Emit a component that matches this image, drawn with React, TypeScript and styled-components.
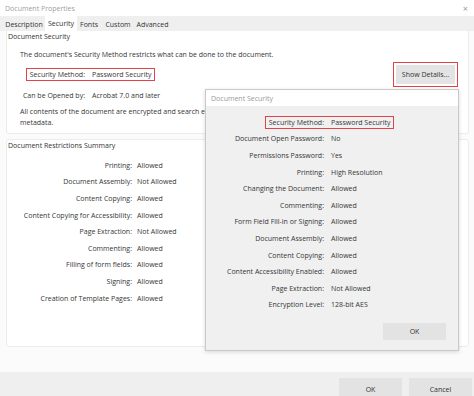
import { styled, createGlobalStyle } from 'styled-components';

const GlobalStyle = createGlobalStyle`
  *, *::before, *::after {
    box-sizing: border-box;
  }
  html, body {
    margin: 0;
    padding: 0;
    background: #fbfbfb;
  }
  body {
    font-family: 'Open Sans', 'Noto Sans', sans-serif;
    font-size: 7px;
    color: #363636;
  }
`;

const RESTRICTIONS = [
  ['Printing:', 'Allowed'],
  ['Document Assembly:', 'Not Allowed'],
  ['Content Copying:', 'Allowed'],
  ['Content Copying for Accessibility:', 'Allowed'],
  ['Page Extraction:', 'Not Allowed'],
  ['Commenting:', 'Allowed'],
  ['Filling of form fields:', 'Allowed'],
  ['Signing:', 'Allowed'],
  ['Creation of Template Pages:', 'Allowed'],
];

const DETAILS = [
  ['Document Open Password:', 'No'],
  ['Permissions Password:', 'Yes'],
  ['Printing:', 'High Resolution'],
  ['Changing the Document:', 'Allowed'],
  ['Commenting:', 'Allowed'],
  ['Form Field Fill-in or Signing:', 'Allowed'],
  ['Document Assembly:', 'Allowed'],
  ['Content Copying:', 'Allowed'],
  ['Content Accessibility Enabled:', 'Allowed'],
  ['Page Extraction:', 'Not Allowed'],
  ['Encryption Level:', '128-bit AES'],
];

const TABS = [
  { name: 'Description', width: 42 },
  { name: 'Security', width: 32, active: true },
  { name: 'Fonts', width: 24 },
  { name: 'Custom', width: 34 },
  { name: 'Advanced', width: 35 },
];

const App = () => {
  return (
    <Window>
      <GlobalStyle />
      <TitleBar>
        <span>Document Properties</span>
        <Close>×</Close>
      </TitleBar>
      <TabStrip>
        {TABS.map((tab) => (
          <Tab key={tab.name} $width={tab.width} $active={tab.active}>
            {tab.name}
          </Tab>
        ))}
      </TabStrip>
      <Content>
        <SecurityBox>
          <Heading>Document Security</Heading>
          <Intro>The document's Security Method restricts what can be done to the document.</Intro>
          <MethodRow>
            <InfoGrid>
              <Label>
                <MarkStart>Security Method:</MarkStart>
              </Label>
              <Value $gap={7}>
                <MarkEnd $gap={7}>Password Security</MarkEnd>
              </Value>
            </InfoGrid>
            <ButtonFrame>
              <Button $width={59} $height={19}>Show Details...</Button>
            </ButtonFrame>
          </MethodRow>
          <InfoGrid>
            <Label>Can be Opened by:</Label>
            <Value $gap={7}>Acrobat 7.0 and later</Value>
          </InfoGrid>
          <Paragraph>
            All contents of the document are encrypted and search engines cannot access the document's
            <br />
            metadata.
          </Paragraph>
        </SecurityBox>
        <SummaryBox>
          <Heading>Document Restrictions Summary</Heading>
          <Rows $labelWidth={124}>
            {RESTRICTIONS.map(([label, value]) => (
              <Row key={label}>
                <Label>{label}</Label>
                <Value $gap={5}>{value}</Value>
              </Row>
            ))}
          </Rows>
        </SummaryBox>

        <Popup>
          <PopupTitle>Document Security</PopupTitle>
          <PopupBody>
            <Rows $labelWidth={118}>
              <Row>
                <Label>
                  <MarkStart>Security Method:</MarkStart>
                </Label>
                <Value $gap={7}>
                  <MarkEnd $gap={7}>Password Security</MarkEnd>
                </Value>
              </Row>
              {DETAILS.map(([label, value]) => (
                <Row key={label}>
                  <Label>{label}</Label>
                  <Value $gap={7}>{value}</Value>
                </Row>
              ))}
            </Rows>
            <PopupActions>
              <Button $width={63} $height={17}>OK</Button>
            </PopupActions>
          </PopupBody>
        </Popup>
      </Content>
      <Footer>
        <Button $width={63} $height={23}>OK</Button>
        <Button $width={63} $height={23}>Cancel</Button>
      </Footer>
    </Window>
  );
};

export default App;

const Window = styled.div`
  position: relative;
  width: 474px;
  height: 396px;
  overflow: hidden;
  display: flex;
  flex-direction: column;
  background: #fbfbfb;
`;

const TitleBar = styled.div`
  height: 16px;
  flex-shrink: 0;
  display: flex;
  align-items: center;
  justify-content: space-between;
  padding: 0 6px 0 5px;
  background: #fff;
  color: #a0a0a0;
  font-size: 7px;
`;

const Close = styled.span`
  font-size: 9px;
  color: #9a9a9a;
`;

const TabStrip = styled.div`
  height: 15px;
  flex-shrink: 0;
  display: flex;
  align-items: flex-end;
  padding-left: 3px;
  background: #efefef;
`;

const Tab = styled.div<{ $width: number; $active?: boolean }>`
  width: ${(p) => p.$width}px;
  height: ${(p) => (p.$active ? 16 : 14)}px;
  display: flex;
  align-items: center;
  justify-content: center;
  background: ${(p) => (p.$active ? '#fff' : 'transparent')};
  color: #333;
  font-size: 7px;
`;

const Content = styled.div`
  flex: none;
  display: flex;
  flex-direction: column;
  gap: 5px;
  padding: 0 5px 0 6px;
`;

const GroupBox = styled.div`
  background: #fff;
  border: 1px solid #ececec;
  border-top: none;
  border-radius: 0 0 3px 3px;
`;

const SecurityBox = styled(GroupBox)`
  height: 103px;
  padding: 0 0 0 1px;
`;

const SummaryBox = styled(GroupBox)`
  height: 208px;
  border-top: 1px solid #ececec;
  border-radius: 3px;
  padding: 0 0 0 1px;
`;

const Heading = styled.div`
  line-height: 12px;
  font-size: 7px;
  color: #333;
`;

const Intro = styled.div`
  margin: 6px 0 0 12px;
  line-height: 12px;
`;

const MethodRow = styled.div`
  display: flex;
  align-items: center;
  justify-content: space-between;
  height: 25px;
  margin-top: 1px;
  padding-right: 10px;
`;

const InfoGrid = styled.div`
  display: grid;
  grid-template-columns: 77px auto;
  align-items: center;
  height: 16px;
  & + & {
    margin-top: 5px;
  }
`;

const Label = styled.span`
  height: 16.6px;
  display: flex;
  align-items: center;
  justify-content: flex-end;
  white-space: nowrap;
`;

const Value = styled.span<{ $gap: number }>`
  height: 16.6px;
  display: flex;
  align-items: center;
  padding-left: ${(p) => p.$gap}px;
  white-space: nowrap;
`;

const MarkStart = styled.span`
  border: 1.5px solid #e0434a;
  border-right: none;
  padding-left: 3px;
  line-height: 11px;
`;

const MarkEnd = styled.span<{ $gap: number }>`
  border: 1.5px solid #e0434a;
  border-left: none;
  margin-left: -${(p) => p.$gap}px;
  padding-left: ${(p) => p.$gap}px;
  padding-right: 3px;
  line-height: 11px;
`;

const Paragraph = styled.div`
  margin: 3px 0 0 12px;
  line-height: 11px;
`;

const Rows = styled.div<{ $labelWidth: number }>`
  display: grid;
  grid-template-columns: ${(p) => p.$labelWidth}px 1fr;
  margin-top: 5px;
`;

const Row = styled.div`
  display: contents;
`;

const ButtonFrame = styled.div`
  border: 1.5px solid #e0434a;
  padding: 2px;
`;

const Button = styled.div<{ $width: number; $height: number }>`
  width: ${(p) => p.$width}px;
  height: ${(p) => p.$height}px;
  flex-shrink: 0;
  display: flex;
  align-items: center;
  justify-content: center;
  background: #e3e3e3;
  color: #333;
  font-size: 7px;
`;

const Popup = styled.div`
  position: absolute;
  left: 205px;
  top: 89px;
  width: 254px;
  height: 262px;
  display: flex;
  flex-direction: column;
  border: 1px solid #c9c9c9;
  box-shadow: 0 1px 4px rgba(0, 0, 0, 0.15);
  background: #f0f0f0;
`;

const PopupTitle = styled.div`
  height: 16px;
  flex-shrink: 0;
  display: flex;
  align-items: center;
  padding-left: 5px;
  background: #fff;
  color: #9a9a9a;
  font-size: 7px;
`;

const PopupBody = styled.div`
  flex: 1;
  display: flex;
  flex-direction: column;
  padding-top: 3px;
`;

const PopupActions = styled.div`
  display: flex;
  justify-content: flex-end;
  padding: 10px 12px 0 0;
`;

const Footer = styled.div`
  height: 24px;
  flex-shrink: 0;
  display: flex;
  justify-content: flex-end;
  align-items: flex-start;
  gap: 7px;
  padding: 6px 2px 0 0;
  background: #efefef;
  margin-top: auto;
`;
